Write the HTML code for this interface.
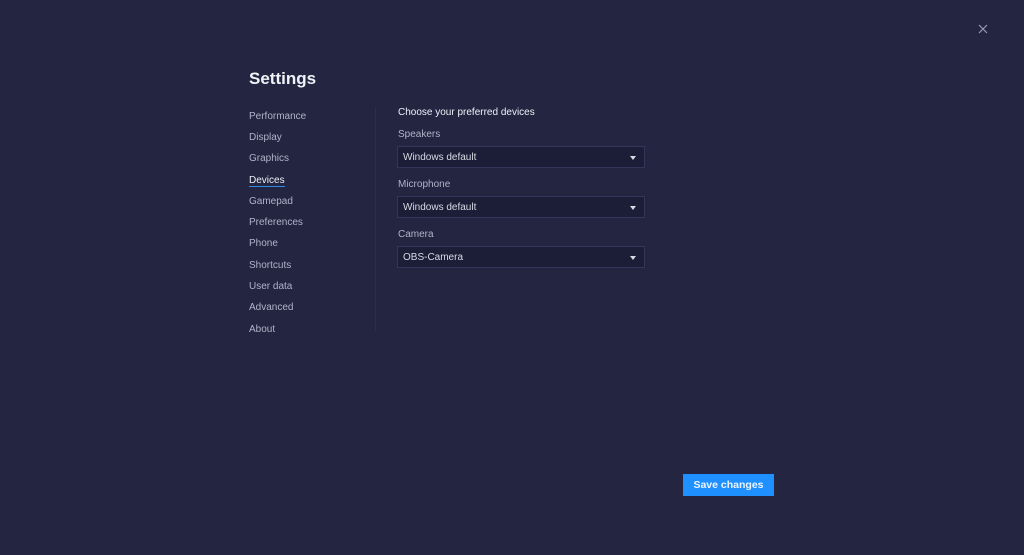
<!DOCTYPE html>
<html><head><style>
body{margin:0;width:1024px;height:555px;background:#232541;font-family:"Liberation Sans",sans-serif;position:relative;overflow:hidden}
h1{position:absolute;left:249px;top:69px;margin:0;font-size:17px;font-weight:bold;color:#f2f3f8}
.nav{position:absolute;left:249px;font-size:10px;color:#b0b3c8}
.sel{position:absolute;left:397px;width:246px;height:20px;background:#1c1e37;border:1px solid #33365a;color:#d8dae6;font-size:10px;line-height:22px;box-sizing:content-box}
.sel span{position:absolute;left:5px}
.sel i{position:absolute;right:8px;top:9px;width:0;height:0;border-left:3.5px solid transparent;border-right:3.5px solid transparent;border-top:4px solid #d8dae6}
.lbl{position:absolute;left:398px;font-size:10px;color:#b0b3c8}
</style></head><body>
<svg style="position:absolute;left:978px;top:24px" width="10" height="10"><path d="M1 1L9 9M9 1L1 9" stroke="#9a9db4" stroke-width="1.2"/></svg>
<h1>Settings</h1>
<div class="nav" style="top:111px">Performance</div>
<div class="nav" style="top:132px">Display</div>
<div class="nav" style="top:153px">Graphics</div>
<div class="nav" style="top:175px;color:#eef0f8">Devices</div>
<div style="position:absolute;left:249px;top:186px;width:36px;height:1px;background:#2f8de8"></div>
<div class="nav" style="top:196px">Gamepad</div>
<div class="nav" style="top:217px">Preferences</div>
<div class="nav" style="top:238px">Phone</div>
<div class="nav" style="top:260px">Shortcuts</div>
<div class="nav" style="top:281px">User data</div>
<div class="nav" style="top:302px">Advanced</div>
<div class="nav" style="top:324px">About</div>
<div style="position:absolute;left:375px;top:107px;width:1px;height:225px;background:#2a2d4c"></div>
<div class="lbl" style="top:107px;color:#eef0f8">Choose your preferred devices</div>
<div class="lbl" style="top:129px">Speakers</div>
<div class="sel" style="top:146px"><span>Windows default</span><i></i></div>
<div class="lbl" style="top:179px">Microphone</div>
<div class="sel" style="top:196px"><span>Windows default</span><i></i></div>
<div class="lbl" style="top:229px">Camera</div>
<div class="sel" style="top:246px"><span>OBS-Camera</span><i></i></div>
<div style="position:absolute;left:683px;top:474px;width:91px;height:22px;background:#1e90ff;color:#eef4ff;font-size:10.5px;font-weight:bold;text-align:center;line-height:23px">Save changes</div>
</body></html>
